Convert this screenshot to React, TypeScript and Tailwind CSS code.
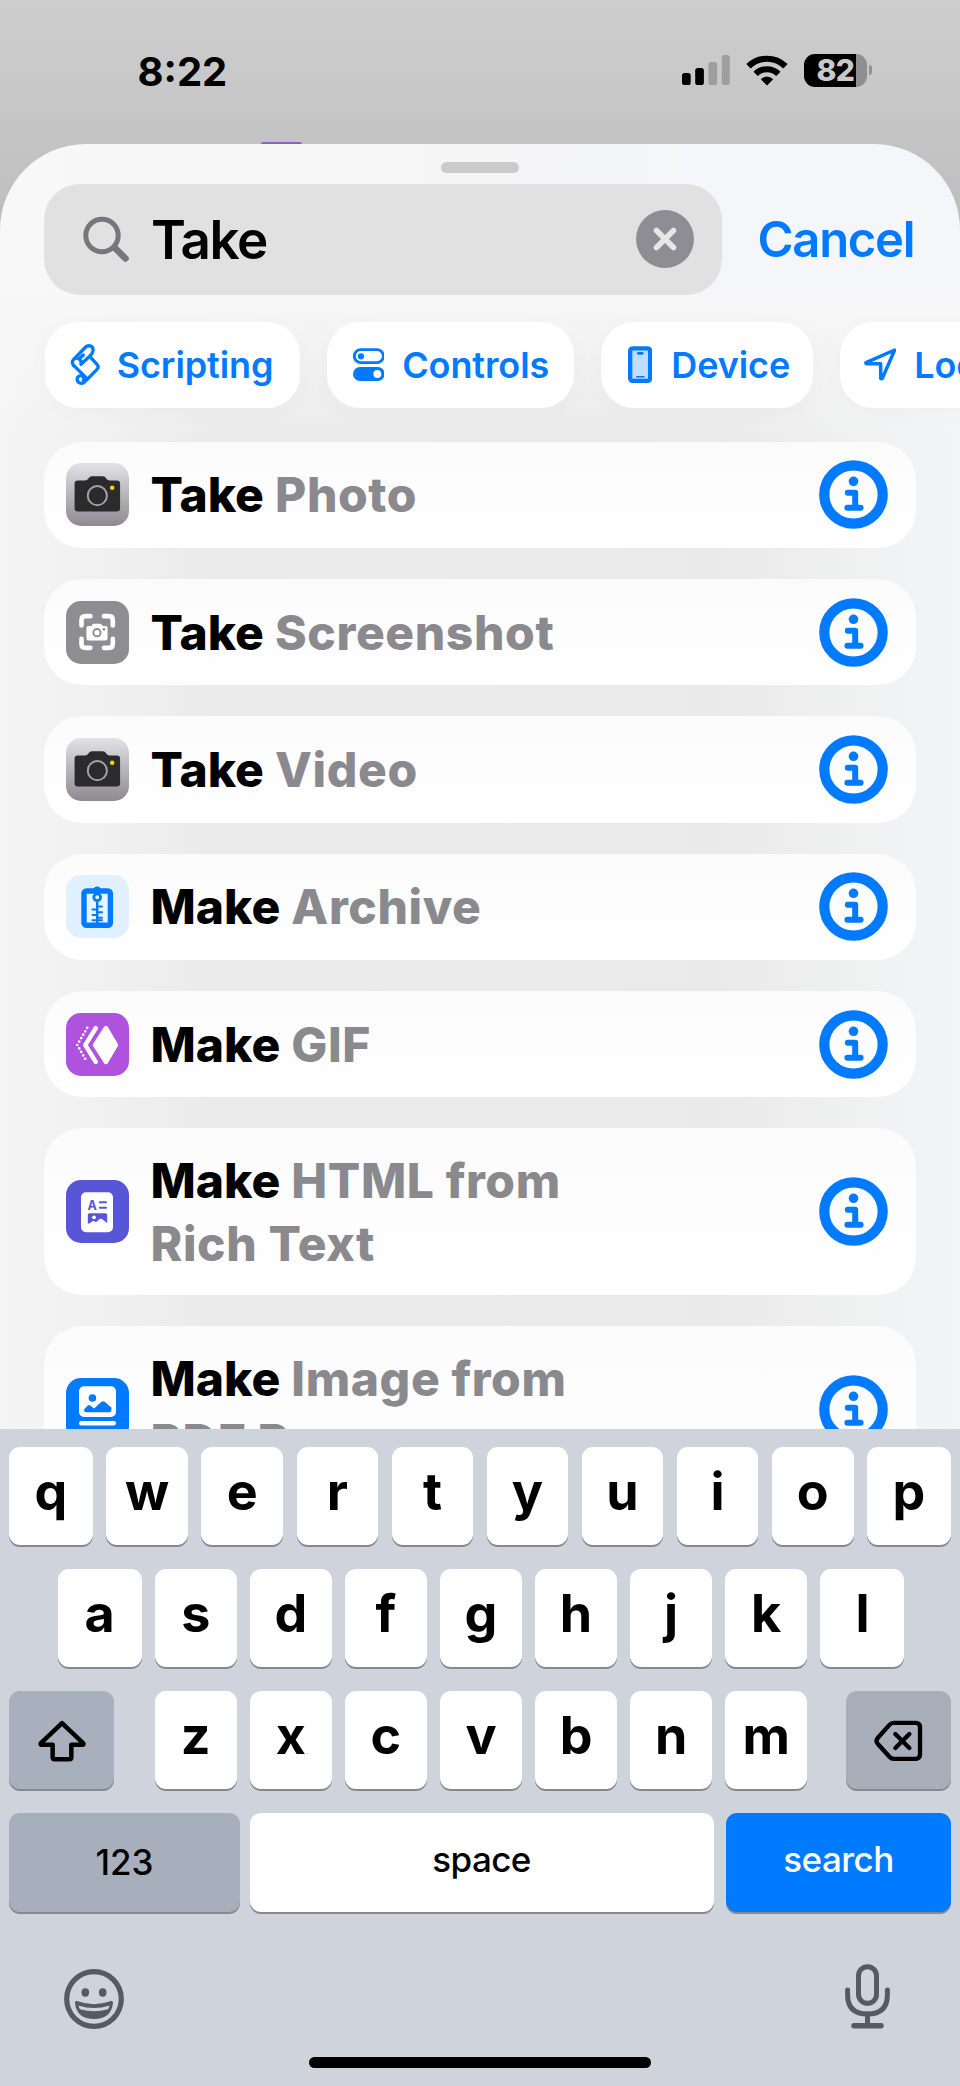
import { ReactNode } from 'react';
import clsx from 'clsx';

interface Action {
  verb: string;
  rest: string;
  icon: ReactNode;
}

function Tile({ children, className }: { children: ReactNode; className: string }) {
  return (
    <div className={clsx('h-[63px] w-[63px] shrink-0 overflow-hidden rounded-[15px]', className)}>
      {children}
    </div>
  );
}

function CameraIcon() {
  return (
    <Tile className="bg-linear-to-b from-[#e3e3e7] to-[#8d8b91]">
      <svg viewBox="106 99 191 191" className="h-full w-full">
        <path
          d="M142 152H164Q170 152 174 146Q178 139 185 139H217Q224 139 228 146Q232 152 238 152H260Q270 152 270 162V236Q270 246 260 246H142Q132 246 132 236V162Q132 152 142 152Z"
          fill="#2b2b2b"
        />
        <circle cx="201" cy="198" r="29" fill="none" stroke="#a2a1a7" strokeWidth="6" />
        <circle cx="246" cy="174" r="7" fill="#ffcc00" />
      </svg>
    </Tile>
  );
}

function ScreenshotIcon() {
  return (
    <Tile className="bg-[#8e8d92]">
      <svg viewBox="106 513 191 191" className="h-full w-full">
        <path
          d="M153 587V571Q153 559 165 559H180M221 559H236Q248 559 248 571V587M248 628V643Q248 655 236 655H221M180 655H165Q153 655 153 643V628"
          fill="none"
          stroke="#fff"
          strokeWidth="14"
          strokeLinecap="round"
        />
        <path
          d="M174 589H183Q186 582 191 582H209Q214 582 217 589H226Q232 589 232 595V627Q232 633 226 633H174Q168 633 168 627V595Q168 589 174 589Z"
          fill="#fff"
        />
        <circle cx="200" cy="609" r="11" fill="none" stroke="#8e8d92" strokeWidth="6" />
        <circle cx="221" cy="599" r="4" fill="#8e8d92" />
      </svg>
    </Tile>
  );
}

function ArchiveIcon() {
  return (
    <Tile className="bg-[#e1f0ff]">
      <svg viewBox="0 0 63 63" className="h-full w-full" fill="none" stroke="#007aff">
        <rect x="18" y="16" width="26.4" height="34.3" rx="2.5" strokeWidth="5.4" fill="#e9f4ff" />
        <circle cx="31.2" cy="15" r="3.6" fill="#007aff" stroke="none" />
        <path d="M31.2 27V50" strokeWidth="2.4" />
        <path
          d="M31 31.5H36M26.5 34.5H31M31 37.2H36M26.5 40H31M31 42.7H36M26.5 45.3H36"
          strokeWidth="2"
          strokeLinecap="round"
        />
        <circle cx="31.2" cy="22.3" r="3.4" fill="#e9f4ff" strokeWidth="2.8" />
      </svg>
    </Tile>
  );
}

function GifIcon() {
  return (
    <Tile className="bg-[#af52de]">
      <svg viewBox="0 0 63 63" className="h-full w-full" fill="none" stroke="#fff">
        <path d="M40 15L50 32L40 49L29 32Z" fill="#fff" strokeWidth="4.4" strokeLinejoin="round" />
        <path
          d="M29.8 15L19.3 32L29.8 49"
          strokeWidth="4.4"
          strokeLinecap="round"
          strokeLinejoin="round"
        />
        <path
          d="M21.2 14.8L11.2 32L21.2 49.2"
          strokeWidth="2.7"
          strokeLinecap="round"
          strokeDasharray="0 3.98"
        />
      </svg>
    </Tile>
  );
}

function RichTextIcon() {
  return (
    <Tile className="bg-[#5856d6]">
      <svg viewBox="0 0 63 63" className="h-full w-full">
        <rect x="15" y="12.3" width="32" height="40" rx="5" fill="#fff" />
        <text x="21.6" y="29.6" fontSize="12.5" fontWeight="700" fill="#5856d6">
          A
        </text>
        <path d="M33.8 22.2H40M33.8 27.8H40" stroke="#5856d6" strokeWidth="2" strokeLinecap="round" />
        <path
          d="M23.6 33.3H39.4Q41.2 33.3 41.2 35V43L36 39Q34.9 38.3 33.8 39L30 42.3L28 41Q27 40.6 26 41.5L23.5 43.5H21.8V35Q21.8 33.3 23.6 33.3Z"
          fill="#5856d6"
        />
        <circle cx="28" cy="37.3" r="1.9" fill="#fff" />
      </svg>
    </Tile>
  );
}

function PdfImageIcon() {
  return (
    <Tile className="bg-[#007aff]">
      <svg viewBox="0 0 63 63" className="h-full w-full">
        <rect x="13" y="8.3" width="37" height="30.7" rx="5" fill="#fff" />
        <path
          d="M18 31.5L21.8 27.5Q23 26.7 24.2 27.6L28 30.5L35.5 23.7Q37 22.6 38.6 23.7L45.4 29.5V32Q45.4 34.2 43.2 34.2H20.2Q18 34.2 18 32Z"
          fill="#007aff"
        />
        <circle cx="26.4" cy="20" r="3.8" fill="#007aff" />
        <rect x="13" y="43" width="37" height="4.6" rx="2.3" fill="#fff" />
        <rect x="13" y="52" width="37" height="4.6" rx="2.3" fill="#fff" />
      </svg>
    </Tile>
  );
}

function InfoIcon() {
  return (
    <svg viewBox="0 0 69 69" className="h-[69px] w-[69px] shrink-0">
      <circle cx="34.5" cy="34.5" r="29.2" fill="none" stroke="#007aff" strokeWidth="10.2" />
      <circle cx="34.5" cy="21.3" r="4.8" fill="#007aff" />
      <path
        d="M28.8 32.8H36.2V47.8M28.4 47.8H41.6"
        fill="none"
        stroke="#007aff"
        strokeWidth="6"
        strokeLinecap="round"
        strokeLinejoin="round"
      />
    </svg>
  );
}

function ScriptingIcon() {
  return (
    <svg
      viewBox="120 130 92 128"
      className="h-[42.7px] w-[30.7px]"
      fill="none"
      stroke="#007aff"
      strokeWidth="10"
      strokeLinecap="round"
      strokeLinejoin="round"
    >
      <path d="M131 198C126 191 126 184 131 179L167 142C174 135 187 138 189 148C190 155 187 162 182 167L153 194V185C150 175 137 173 131 179" />
      <path d="M131 197L168 234" />
      <path d="M181 172L201 194C206 200 205 205 201 209L165 246C158 253 147 253 143 245C139 236 144 228 152 228C160 228 164 236 160 242" />
      <path d="M149 176L160 166" />
    </svg>
  );
}

function ControlsIcon() {
  return (
    <svg viewBox="968 144 95 100" className="h-[33.3px] w-[31.7px]">
      <rect x="972" y="149" width="87" height="39" rx="19.5" fill="none" stroke="#007aff" strokeWidth="8.5" />
      <circle cx="992" cy="169" r="9.5" fill="#007aff" />
      <rect x="968" y="201" width="95" height="42" rx="21" fill="#007aff" />
      <circle cx="1041" cy="222" r="12" fill="#fff" />
    </svg>
  );
}

function DeviceIcon() {
  return (
    <svg viewBox="444 138 73 112" className="h-[37.3px] w-[24.3px]" stroke="#007aff">
      <rect x="450.5" y="145" width="60" height="98" rx="8" fill="#bfdeff" strokeWidth="13" />
      <path d="M475 160H487" strokeWidth="8" strokeLinecap="round" />
      <path d="M470 230H492" strokeWidth="4.5" strokeLinecap="round" />
    </svg>
  );
}

function LocationIcon() {
  return (
    <svg viewBox="1151 146 98 98" className="h-[32.7px] w-[32.7px]">
      <path
        d="M1243 152L1157 190Q1156 193 1159 193H1201V237Q1203 240 1206 237Z"
        fill="none"
        stroke="#007aff"
        strokeWidth="10.5"
        strokeLinejoin="round"
      />
    </svg>
  );
}

function StatusBar() {
  return (
    <header className="relative flex h-[144px] shrink-0 items-start justify-between pr-[88px] pl-[137.5px]">
      <span className="mt-[47.5px] text-[40px] leading-[48px] font-bold">8:22</span>
      <div className="mt-[53px] flex h-[34px] items-center">
        <svg viewBox="0 0 48 30" className="h-[30px] w-[48px]">
          <rect x="0" y="18" width="8.7" height="12" rx="2.6" />
          <rect x="13.2" y="13" width="8.7" height="17" rx="2.6" />
          <rect x="26.5" y="7" width="8.7" height="23" rx="2.6" fill="#9e9e9e" />
          <rect x="39.8" y="0" width="8" height="30" rx="2.6" fill="#9e9e9e" />
        </svg>
        <svg viewBox="0 0 42 31" className="ml-[16px] h-[31px] w-[42px]" fill="none" stroke="#000">
          <path d="M2.5 11.3A26.5 26.5 0 0 1 39.5 11.3" strokeWidth="6.2" />
          <path d="M9.6 18.8A16.3 16.3 0 0 1 32.4 18.8" strokeWidth="6" />
          <path d="M14.8 24.2Q21 19 27.2 24.2L21 30.6Z" fill="#000" stroke="none" />
        </svg>
        <div className="ml-[16px] flex h-[33px] w-[63px] items-center justify-end rounded-[11px] bg-linear-to-r from-black from-82% to-[#8f8f8f] to-82% pr-[12.5px] text-[30px] leading-[33px] font-extrabold tracking-[-0.5px] text-[#c9c9c9]">
          82
        </div>
        <div className="ml-[2px] h-[10px] w-[3px] rounded-r-full bg-[#929292]"></div>
      </div>
      <div className="absolute bottom-0 left-[261px] h-[2px] w-[41px] rounded-t-sm bg-[#955fbd]"></div>
    </header>
  );
}

function SearchBar() {
  return (
    <div className="mt-[11px] flex items-center pl-[44px]">
      <div className="flex h-[111px] w-[678px] items-center rounded-[36px] bg-[#e1e1e2] pr-[28px] pl-[38px]">
        <svg viewBox="0 0 48 46" className="h-[46px] w-[48px]" fill="none" stroke="#76767c">
          <circle cx="20" cy="19.5" r="16.2" strokeWidth="5" />
          <path d="M32.5 31.5L43.5 42.5" strokeWidth="6.6" strokeLinecap="round" />
        </svg>
        <span className="mt-[2px] ml-[21px] text-[53px] leading-[64px] font-semibold tracking-[-1.5px]">Take</span>
        <svg viewBox="0 0 58 58" className="ml-auto h-[58px] w-[58px]">
          <circle cx="29" cy="29" r="29" fill="#8e8d93" />
          <path d="M20.5 20.5L37.5 37.5M37.5 20.5L20.5 37.5" stroke="#e6e6e7" strokeWidth="5.6" strokeLinecap="round" />
        </svg>
      </div>
      <span className="mt-[1px] ml-[35.5px] text-[49px] leading-[60px] font-[560] tracking-[-1.3px] text-[#007aff]">
        Cancel
      </span>
    </div>
  );
}

function Chip({ icon, label, className }: { icon: ReactNode; label: string; className: string }) {
  return (
    <div
      className={clsx(
        'flex h-[86.5px] shrink-0 items-center rounded-[33px] bg-white text-[36px] font-semibold text-[#007aff]',
        'shadow-[0_4px_24px_rgba(0,0,0,0.025)]',
        className
      )}
    >
      {icon}
      <span className="mt-[1px] tracking-[-0.1px]">{label}</span>
    </div>
  );
}

const actions: Action[] = [
  { verb: 'Take', rest: 'Photo', icon: <CameraIcon /> },
  { verb: 'Take', rest: 'Screenshot', icon: <ScreenshotIcon /> },
  { verb: 'Take', rest: 'Video', icon: <CameraIcon /> },
  { verb: 'Make', rest: 'Archive', icon: <ArchiveIcon /> },
  { verb: 'Make', rest: 'GIF', icon: <GifIcon /> },
  { verb: 'Make', rest: 'HTML from Rich Text', icon: <RichTextIcon /> },
  { verb: 'Make', rest: 'Image from PDF Page', icon: <PdfImageIcon /> },
];

function ActionRow({ verb, rest, icon }: Action) {
  return (
    <div className="flex shrink-0 items-center rounded-[38px] bg-linear-to-b from-[#fbfbfb] to-white py-[18.7px] pr-[28.5px] pl-[21.5px]">
      {icon}
      <p className="ml-[22px] w-[460px] py-[1.8px] text-[48px] leading-[63px] font-extrabold tracking-[0.6px] text-[#8a898e]">
        <span className="tracking-normal text-black">{verb}</span> {rest}
      </p>
      <div className="ml-auto">
        <InfoIcon />
      </div>
    </div>
  );
}

function Key({ children, className }: { children: ReactNode; className?: string }) {
  return (
    <div
      className={clsx(
        'flex h-[98.5px] items-center justify-center rounded-[11px] shadow-[0_2px_0_#87888c]',
        className ?? 'w-[81.7px] bg-white pb-[8px] text-[52px] leading-[60px] font-bold'
      )}
    >
      {children}
    </div>
  );
}

const edgeKey = 'w-[84px] bg-white pb-[8px] text-[52px] leading-[60px] font-bold';

function Keyboard() {
  return (
    <div className="flex h-[657px] shrink-0 flex-col bg-[#cfd3db] px-[9px] pt-[17.5px]">
      <div className="flex flex-col gap-[23.7px]">
        <div className="flex justify-between">
          {'qwertyuiop'.split('').map((k, i) => (
            <Key key={k} className={i === 0 || i === 9 ? edgeKey : undefined}>
              {k}
            </Key>
          ))}
        </div>
        <div className="flex justify-between pr-[46.5px] pl-[48.5px]">
          {'asdfghjkl'.split('').map((k, i) => (
            <Key key={k} className={i === 0 || i === 8 ? edgeKey : undefined}>
              {k}
            </Key>
          ))}
        </div>
        <div className="flex justify-between">
          <Key className="w-[105px] bg-[#a8afbd]">
            <svg viewBox="112 900 144 128" className="mt-[3px] h-[42.7px] w-[48px]">
              <path
                d="M184 909L248 970Q249 974 246 974.5H212V1012Q212 1018 206 1018H162Q156 1018 156 1012V974.5H122Q119 974 120 970Z"
                fill="none"
                stroke="#000"
                strokeWidth="13.5"
                strokeLinejoin="round"
              />
            </svg>
          </Key>
          <div className="ml-[2px] flex gap-[13.4px]">
            {'zxcvbnm'.split('').map((k) => (
              <Key key={k}>{k}</Key>
            ))}
          </div>
          <Key className="w-[105px] bg-[#a8afbb]">
            <svg
              viewBox="1241 902 146 125"
              className="mt-[2px] h-[41.7px] w-[48.7px]"
              fill="none"
              stroke="#000"
              strokeWidth="13"
              strokeLinecap="round"
              strokeLinejoin="round"
            >
              <path d="M1300 910.5H1366Q1379 910.5 1379 924V1005Q1379 1018.5 1366 1018.5H1300Q1293 1018.5 1288 1013L1252 973Q1245 964.5 1252 956L1288 916Q1293 910.5 1300 910.5Z" />
              <path d="M1305 944L1347 986M1347 944L1305 986" />
            </svg>
          </Key>
        </div>
        <div className="flex justify-between text-[35px] font-medium">
          <Key className="w-[231px] bg-[#a8afbc]">123</Key>
          <Key className="ml-[-3px] w-[464px] bg-white pb-[6px] tracking-[-0.6px]">space</Key>
          <Key className="w-[225px] bg-[#007aff] pb-[6px] tracking-[-0.5px] text-white">search</Key>
        </div>
      </div>
      <div className="mt-[52px] flex items-end justify-between pr-[61px] pl-[54.5px]">
        <svg viewBox="0 0 60 60" className="h-[60px] w-[60px]" fill="none" stroke="#555a63">
          <circle cx="30" cy="30" r="27.3" strokeWidth="5.2" />
          <ellipse cx="21.3" cy="23.5" rx="3.8" ry="4.2" fill="#555a63" stroke="none" />
          <ellipse cx="38.7" cy="23.5" rx="3.8" ry="4.2" fill="#555a63" stroke="none" />
          <path
            d="M12.5 33.5Q30 40 47.5 33.5Q46 48.5 30 48.5Q14 48.5 12.5 33.5Z"
            fill="#555a63"
            strokeWidth="3"
            strokeLinejoin="round"
          />
          <path
            d="M14.5 36.5Q30 41.5 45.5 36.5Q45 39 44 40.2Q30 44.5 16 40.2Q15 39 14.5 36.5Z"
            fill="#cfd3db"
            stroke="none"
          />
        </svg>
        <svg viewBox="0 0 45 65" className="h-[65px] w-[45px]" fill="none" stroke="#555a63" strokeLinecap="round">
          <rect x="13.5" y="2.7" width="18" height="36.6" rx="9" strokeWidth="5" />
          <path d="M2.6 26V31Q2.6 50 22.5 50Q42.4 50 42.4 31V26" strokeWidth="5" />
          <path d="M22.5 50V61" strokeWidth="5" />
          <path d="M9 61.8H36" strokeWidth="5.5" />
        </svg>
      </div>
      <div className="mx-auto mt-auto mb-[18px] h-[11px] w-[342px] rounded-full bg-black"></div>
    </div>
  );
}

export default function App() {
  return (
    <div className="flex h-[2086px] w-[960px] flex-col overflow-hidden bg-linear-to-b from-[#cecece] to-[#bcbcbc] to-12% font-['Inter',sans-serif] text-black">
      <StatusBar />
      <main className="flex h-[1285px] shrink-0 flex-col overflow-hidden rounded-t-[86px] bg-linear-to-r from-[#f8f8f8] via-[#f5f5f6] to-[#f4f6fa]">
        <div className="mx-auto mt-[17.5px] h-[11px] w-[78px] shrink-0 rounded-full bg-[#cbcbcb]"></div>
        <SearchBar />
        <div className="flex flex-1 flex-col bg-[linear-gradient(to_right,#f5f5f6,#ebebec_22%,#eaeaea_75%,#f4f5f6)]">
          <div className="flex gap-[27px] overflow-hidden bg-linear-to-b from-[#f7f7f8] to-[#f7f7f8]/0 pt-[27px] pb-[33.5px] pl-[45px]">
            <Chip icon={<ScriptingIcon />} label="Scripting" className="w-[255px] gap-[16px] pl-[25px]" />
            <Chip icon={<ControlsIcon />} label="Controls" className="w-[247px] gap-[18px] pl-[25.5px]" />
            <Chip icon={<DeviceIcon />} label="Device" className="w-[212px] gap-[19px] pl-[27px]" />
            <Chip icon={<LocationIcon />} label="Location" className="w-[262px] gap-[18px] pl-[23.5px]" />
          </div>
          <div className="flex flex-col gap-[31px] px-[44px]">
            {actions.map((action) => (
              <ActionRow key={action.rest} {...action} />
            ))}
          </div>
        </div>
      </main>
      <Keyboard />
    </div>
  );
}
